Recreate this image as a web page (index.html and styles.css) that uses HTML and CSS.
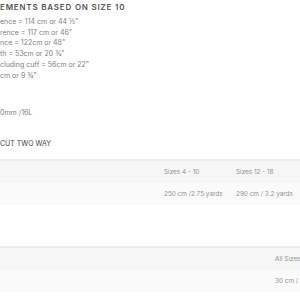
FILE: index.html
```html
<!DOCTYPE html>
<html>
<head>
<meta charset="utf-8">
<link rel="stylesheet" href="styles.css">
</head>
<body>
<div class="page">
  <h2 class="heading">EMENTS BASED ON SIZE 10</h2>
  <ul class="list">
    <li>ence = 114 cm or 44 ½"</li>
    <li>rence = 117 cm or 46"</li>
    <li>nce = 122cm or 48"</li>
    <li>th = 53cm or 20 ¾"</li>
    <li>cluding cuff = 56cm or 22"</li>
    <li>cm or 9 ¾"</li>
  </ul>
  <p class="needle">0mm /16L</p>
  <p class="cut">CUT TWO WAY</p>
  <div class="table t1">
    <div class="row r1"><span></span><span>Sizes 4 - 10</span><span>Sizes 12 - 18</span></div>
    <div class="row r2"><span></span><span>250 cm /2.75 yards</span><span>290 cm / 3.2 yards</span></div>
  </div>
  <div class="table t2">
    <div class="row r1"><span></span><span>All Sizes</span></div>
    <div class="row r2"><span></span><span>30 cm /</span></div>
  </div>
</div>
</body>
</html>
```

FILE: styles.css
```css
html, body {
  margin: 0;
  padding: 0;
  background: #ffffff;
}
.page {
  font-family: "Inter", "Liberation Sans", sans-serif;
  font-size: 7px;
  color: #808080;
  overflow: hidden;
  width: 300px;
  padding-top: 2px;
}
.heading {
  margin: 0;
  font-size: 8px;
  line-height: 10px;
  font-weight: 600;
  letter-spacing: 0.8px;
  color: #555555;
  white-space: nowrap;
}
.list {
  list-style: none;
  margin: 5px 0 0 0;
  padding: 0;
  line-height: 10.7px;
  white-space: nowrap;
}
.needle {
  margin: 27px 0 0 0;
  line-height: 10.7px;
}
.cut {
  margin: 20px 0 0 0;
  line-height: 10.7px;
  color: #444444;
}
.table {
  border-top: 2px solid #ececec;
  white-space: nowrap;
  font-size: 6.4px;
}
.t1 {
  margin-top: 9px;
}
.t2 {
  margin-top: 41px;
}
.row {
  display: grid;
  height: 22px;
  align-items: center;
  color: #929292;
}
.t1 .row {
  grid-template-columns: 164px 72px 1fr;
}
.t2 .row {
  grid-template-columns: 275px 1fr;
}
.r1 {
  background: #f6f6f6;
}
.r2 {
  background: #fafafa;
}
```
